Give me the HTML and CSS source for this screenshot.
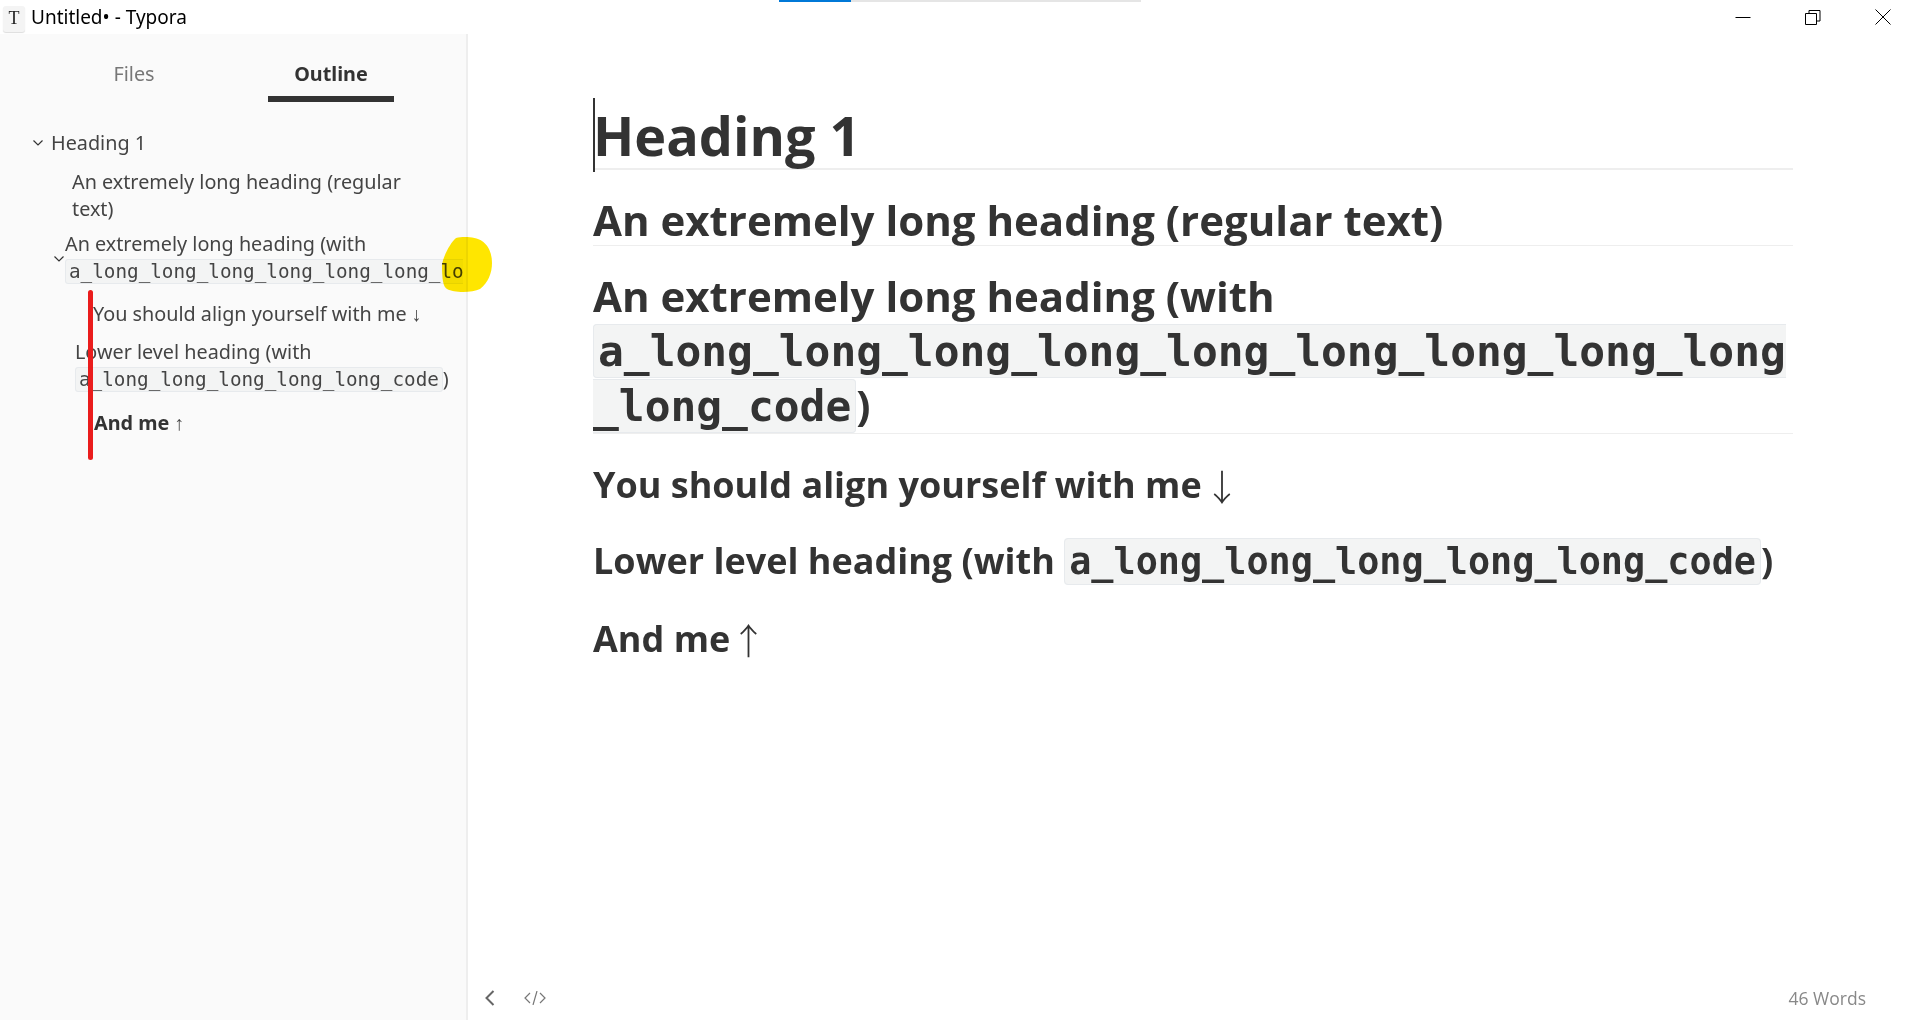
FILE: index.html
```html
<!DOCTYPE html>
<html lang="en">
<head>
<meta charset="utf-8">
<title>Untitled• - Typora</title>
<link rel="stylesheet" href="styles.css">
</head>
<body>
<div class="app">
  <header class="titlebar">
    <div class="app-icon">T</div>
    <div class="app-title">Untitled• - Typora</div>
    <div class="win-controls">
      <div class="win-btn"><svg width="16" height="16" viewBox="0 0 16 16"><path d="M0.5 8.5H15.5" stroke="#000" fill="none"/></svg></div>
      <div class="win-btn"><svg width="16" height="16" viewBox="0 0 16 16"><path d="M0.5 4.5H11.5V15.5H0.5ZM4 4.5V1.5H15V12H11.5" stroke="#000" fill="none"/></svg></div>
      <div class="win-btn"><svg width="16" height="16" viewBox="0 0 16 16"><path d="M0.5 0.5L15.5 15.5M15.5 0.5L0.5 15.5" stroke="#000" fill="none"/></svg></div>
    </div>
  </header>
  <div class="workspace">
    <aside class="sidebar">
      <nav class="tabs">
        <div class="tab">Files</div>
        <div class="tab tab-active">Outline</div>
      </nav>
      <div class="outline">
        <div class="item item-1">
          <svg class="chev" width="10" height="6" viewBox="0 0 10 6"><path d="M0.5 0.5L5 5L9.5 0.5" stroke="#333" stroke-width="1.2" fill="none"/></svg>
          <span>Heading 1</span>
        </div>
        <div class="item item-2">An extremely long heading (regular text)</div>
        <div class="item item-3">
          <svg class="chev" width="10" height="6" viewBox="0 0 10 6"><path d="M0.5 0.5L5 5L9.5 0.5" stroke="#333" stroke-width="1.2" fill="none"/></svg>
          <span class="item-text">An extremely long heading (with<br><code class="ocode">a_long_long_long_long_long_long_long_long_long_long_code</code>)</span>
        </div>
        <div class="item item-4">You should align yourself with me ↓</div>
        <div class="item item-5">Lower level heading (with <code class="ocode">a_long_long_long_long_long_code</code>)</div>
        <div class="item item-6"><strong>And me</strong> ↑</div>
      </div>
    </aside>
    <main class="main">
      <article class="editor">
        <h1 class="h1">Heading 1<span class="caret"></span></h1>
        <h2 class="h2">An extremely long heading (regular text)</h2>
        <h2 class="h2 h2-wrap">An extremely long heading (with<br><code class="code">a_long_long_long_long_long_long_long_long_long_long_code</code>)</h2>
        <h3 class="h3">You should align yourself with me <span class="arrow">↓</span></h3>
        <h4 class="h4">Lower level heading (with <code class="code">a_long_long_long_long_long_code</code>)</h4>
        <h5 class="h5">And me <span class="arrow">↑</span></h5>
      </article>
      <footer class="footer">
        <svg class="foot-back" width="10" height="16" viewBox="0 0 10 16"><path d="M8.5 1L1.5 8L8.5 15" stroke="#666" stroke-width="2" fill="none"/></svg>
        <svg class="foot-code" width="22" height="14" viewBox="0 0 22 14"><path d="M6 2L1 7L6 12M16 2L21 7L16 12M13 0L9 14" stroke="#777" stroke-width="1.2" fill="none"/></svg>
        <div class="words">46 Words</div>
      </footer>
    </main>
  </div>
  <div class="progress"><div class="progress-fill"></div></div>
  <svg class="mark-yellow" width="50" height="56" viewBox="0 0 50 56"><path d="M14 1C22 -1 34 0 40 4C46 8 50 16 50 26C50 36 46 46 38 52C30 56 12 56 5 52C2 50 0 46 0 28C1 20 8 6 14 1Z" fill="#ffe600"/></svg>
  <div class="mark-red"></div>
</div>
</body>
</html>
```
FILE: styles.css
```css
* { box-sizing: border-box; }
html, body { margin: 0; height: 100%; background: #fff; overflow: hidden; }
.app { position: relative; height: 1020px; display: flex; flex-direction: column; color: #333; font-family: "Open Sans", sans-serif; }

.titlebar { height: 34px; flex: none; display: flex; align-items: center; padding-left: 3px; background: #fff; }
.app-icon { width: 22px; height: 26px; margin-top: 4px; border-radius: 3px; background: #f4f4f4; box-shadow: 0 1px 1px #ddd; font: 18px/24px "Liberation Serif", serif; color: #222; text-align: center; }
.app-title { margin-left: 6px; font: 19px/34px "Noto Sans", sans-serif; color: #000; }
.win-controls { margin-left: auto; margin-top: -1px; padding-right: 2px; display: flex; }
.win-btn { width: 70px; height: 34px; display: flex; align-items: center; justify-content: center; }

.workspace { flex: 1; display: flex; min-height: 0; }
.sidebar { width: 468px; flex: none; background: #fafafa; border-right: 2px solid #eee; overflow: hidden; font-family: "Noto Sans", sans-serif; font-size: 19.8px; }
.tabs { display: flex; gap: 71px; padding: 22px 0 0 71px; }
.tab { width: 126px; height: 46px; text-align: center; line-height: 36px; color: #777; }
.tab-active { color: #333; font-weight: 700; border-bottom: 6px solid #333; }

.outline { padding-top: 27px; line-height: 27px; color: #444; }
.item-1 { display: flex; align-items: center; padding-left: 33px; gap: 8px; height: 27px; }
.item-2 { margin: 12px 50px 0 72px; }
.item-3 { display: flex; align-items: center; margin: 8px 3px 0 54px; overflow: hidden; }
.item-3 .chev { flex: none; margin-top: 4px; }
.item-text { margin-left: 1px; min-width: 0; white-space: nowrap; }
.item-4 { margin: 16px 0 0 93px; }
.item-5 { margin: 11px 90px 0 75px; width: 380px; }
.item-6 { margin: 17px 0 0 94px; }
.item-6 strong { color: #333; }
.ocode { font: 19.3px "DejaVu Sans Mono", monospace; background: #f3f4f4; border: 1px solid #e7eaed; border-radius: 3px; padding: 0 3px; color: #444; }

.main { flex: 1; min-width: 0; display: flex; flex-direction: column; }
.editor { flex: 1; padding: 64px 0 0 125px; width: 1325px; color: #333; }
.h1, .h2, .h3, .h4, .h5 { margin: 0; font-weight: 700; }
.h1 { position: relative; font-size: 54px; line-height: 74px; height: 72px; border-bottom: 2px solid #eee; }
.caret { position: absolute; left: 0; top: 0; width: 2px; height: 74px; background: #333; }
.h2 { margin-top: 25px; font-size: 42px; line-height: 50px; border-bottom: 1px solid #eee; }
.h2-wrap { margin-top: 23px; line-height: 54px; }
.h3 { margin-top: 26px; font-size: 36px; line-height: 50px; }
.h4 { margin-top: 26px; font-size: 36px; line-height: 50px; }
.h5 { margin-top: 27px; font-size: 36px; line-height: 50px; }
.code { font-family: "DejaVu Sans Mono", monospace; background: #f3f4f4; border: 1px solid #e7eaed; border-radius: 4px; padding: 1px 4px; }
.h2 .code { font-size: 42.9px; word-break: break-all; }
.h4 .code { font-size: 36.8px; }
.arrow { font-family: "Noto Sans CJK SC", sans-serif; font-weight: 300; margin-left: -7px; vertical-align: -3px; }
.h5 .arrow { margin-left: -9px; }

.footer { height: 46px; flex: none; display: flex; align-items: center; padding: 2px 0 0 17px; font-size: 17.5px; color: #888; }
.foot-code { margin-left: 29px; }
.words { margin-left: auto; margin-right: 54px; }

.progress { position: absolute; left: 779px; top: 0; width: 362px; height: 2px; background: #e5e5e5; }
.progress-fill { width: 72px; height: 2px; background: #0078d7; }
.mark-yellow { position: absolute; left: 442px; top: 237px; mix-blend-mode: multiply; }
.mark-red { position: absolute; left: 88px; top: 290px; width: 5px; height: 170px; border-radius: 3px; background: #ea1c1c; }
```
